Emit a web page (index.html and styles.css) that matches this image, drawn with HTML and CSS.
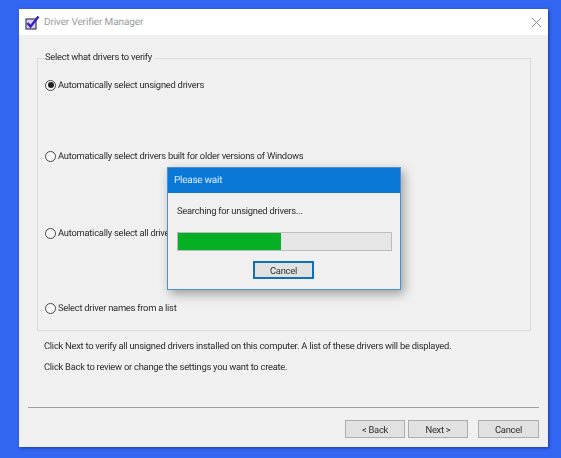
FILE: index.html
```html
<!DOCTYPE html>
<html lang="en">
<head>
<meta charset="utf-8">
<title>Driver Verifier Manager</title>
<link rel="stylesheet" href="styles.css">
</head>
<body>
<main class="window">
  <header class="titlebar">
    <svg class="app-icon" width="15" height="15" viewBox="0 0 15 15" aria-hidden="true">
      <rect x="1" y="4" width="10" height="10" fill="#d9d6ea" stroke="#3a3a5a" stroke-width="1.2"/>
      <path d="M2.5 8 L5.5 11.5 L13.5 1.5" fill="none" stroke="#3b1fc4" stroke-width="2.4"/>
    </svg>
    <span class="title">Driver Verifier Manager</span>
    <svg class="close" width="11" height="11" viewBox="0 0 11 11" aria-hidden="true">
      <path d="M1 1 L10 10 M10 1 L1 10" stroke="#8a8a8a" stroke-width="1" fill="none"/>
    </svg>
  </header>
  <div class="content">
    <fieldset class="group">
      <legend class="legend">Select what drivers to verify</legend>
      <label class="option first"><span class="radio checked"></span>Automatically select unsigned drivers</label>
      <label class="option second"><span class="radio"></span>Automatically select drivers built for older versions of Windows</label>
      <label class="option third"><span class="radio"></span>Automatically select all drivers installed on this computer</label>
      <label class="option fourth"><span class="radio"></span>Select driver names from a list</label>
    </fieldset>
    <p class="note note-a">Click Next to verify all unsigned drivers installed on this computer. A list of these drivers will be displayed.</p>
    <p class="note note-b">Click Back to review or change the settings you want to create.</p>
  </div>
  <footer class="footer">
    <button class="btn">&lt; Back</button>
    <button class="btn">Next &gt;</button>
    <button class="btn btn-cancel">Cancel</button>
  </footer>
</main>
<section class="dialog">
  <div class="dialog-title">Please wait</div>
  <div class="dialog-body">
    <div class="dialog-text">Searching for unsigned drivers...</div>
    <div class="progress"><div class="progress-fill"></div></div>
    <div class="dialog-actions"><button class="btn btn-focus">Cancel</button></div>
  </div>
</section>
</body>
</html>
```
FILE: styles.css
```css
* { box-sizing: border-box; }
html, body { margin: 0; height: 100%; }
body {
  width: 561px;
  height: 458px;
  overflow: hidden;
  position: relative;
  background: #3366f2;
  padding: 9px 13px 11px 19px;
  font-family: "Roboto", "Liberation Sans", sans-serif;
  font-size: 9.4px;
  letter-spacing: -.26px;
  text-rendering: geometricPrecision;
  color: #2e2e2e;
}
.window {
  height: 438px;
  background: #f0f0f0;
  display: flex;
  flex-direction: column;
  box-shadow: 1px 1px 3px rgba(10, 30, 110, .6);
  filter: blur(.35px);
}
.titlebar {
  height: 26px;
  flex: none;
  background: #fff;
  display: flex;
  align-items: center;
  padding: 0 6px;
  gap: 4px;
}
.title { color: #9a9a9a; font-size: 10px; letter-spacing: -.13px; flex: 1; padding-top: 1px; }
.content { flex: 1; padding: 15px 17px 0 18px; }
.group {
  margin: 0;
  height: 281px;
  padding: 0 0 0 7px;
  border: 1px solid #dcdcdc;
  min-width: 0;
}
.legend { padding: 0 3px 0 0; margin-left: 0; line-height: 16px; }
.option { display: flex; align-items: center; gap: 2px; height: 14px; }
.first { margin-top: 12px; }
.second { margin-top: 57px; }
.third { margin-top: 63px; }
.fourth { margin-top: 61px; }
.radio {
  width: 11px;
  height: 11px;
  border: 1px solid #444;
  border-radius: 50%;
  background: #f8f8f8;
  flex: none;
  position: relative;
}
.radio.checked::after {
  content: "";
  position: absolute;
  inset: 1.5px;
  border-radius: 50%;
  background: #222;
}
.note { margin: 0 0 0 7px; line-height: 14px; }
.note-a { margin-top: 8.5px; }
.note-b { margin-top: 7.5px; }
.footer {
  flex: none;
  height: 40px;
  margin: 0 9px 0 9px;
  border-top: 1px solid #a0a0a0;
  display: flex;
  justify-content: flex-end;
  align-items: flex-start;
  padding-top: 12px;
  gap: 3px;
}
.btn {
  width: 60px;
  height: 18px;
  padding: 0;
  font: inherit;
  letter-spacing: inherit;
  color: #2e2e2e;
  background: #e1e1e1;
  border: 1px solid #adadad;
}
.btn-cancel { margin-left: 7px; width: 61px; }
.dialog {
  position: absolute;
  left: 167px;
  top: 167px;
  width: 234px;
  height: 123px;
  background: #f0f0f0;
  border: 1px solid #4a90d0;
  box-shadow: 3px 4px 10px rgba(0, 0, 0, .35);
  filter: blur(.3px);
}
.dialog-title {
  height: 25px;
  background: #0a78d7;
  color: #dcecff;
  padding: 0 6px;
  line-height: 25px;
  font-size: 10px;
}
.dialog-body { padding: 12px 8px 0 9px; }
.dialog-text { line-height: 14px; }
.progress {
  margin-top: 13px;
  height: 19px;
  background: #e6e6e6;
  border: 1px solid #bcbcbc;
}
.progress-fill { width: 48.5%; height: 100%; background: #06b025; }
.dialog-actions { display: flex; justify-content: center; margin-top: 10px; }
.btn-focus { border: 2px solid #0f6fb8; background: #e1e1e1; width: 61px; height: 18px; margin-left: -2px; }
```
